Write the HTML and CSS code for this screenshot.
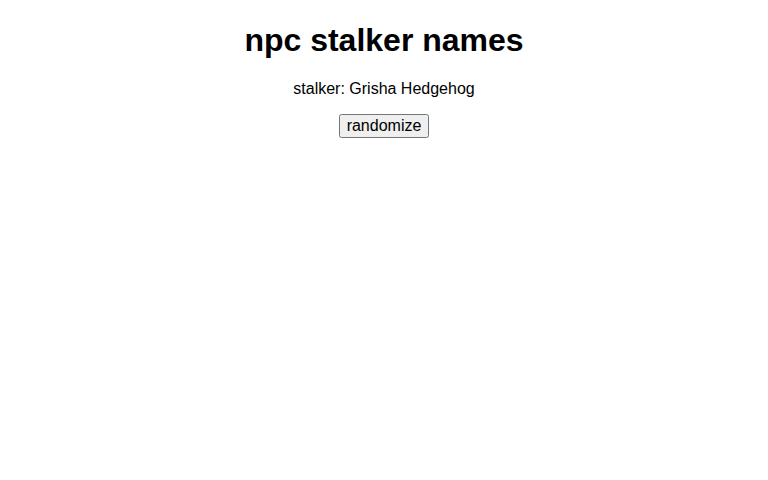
FILE: index.html
```html
<!DOCTYPE html>
<html>
<head>
    <title>npc stalker names</title>
    <link rel="stylesheet" href="styles.css">
</head>
<body>
    <h1>npc stalker names</h1>
    <p id="name">stalker: Grisha Hedgehog</p>
    <button id="randomize">randomize</button>
</body>
</html>
```
FILE: styles.css
```css
body {
    font-family: "Liberation Sans", Arial, sans-serif;
    text-align: center;
}

h1 {
    margin-top: 14px;
}

button {
    font-family: "Liberation Sans", Arial, sans-serif;
    font-size: 16px;
}
```
